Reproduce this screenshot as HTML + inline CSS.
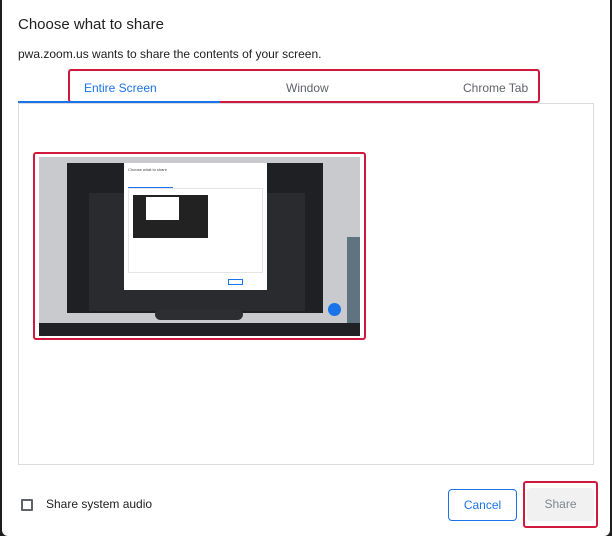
<!DOCTYPE html>
<html><head><style>
*{margin:0;padding:0;box-sizing:border-box}
body{width:612px;height:536px;background:#1e1e1e;font-family:"Liberation Sans",sans-serif;position:relative;overflow:hidden}
.dlg{position:absolute;left:2px;top:0;width:608px;height:536px;background:#fff;border-radius:0 0 6px 6px}
.a{position:absolute}
</style></head><body>
<div class="dlg"></div>
<div class="a" style="left:18px;top:16px;font-size:15px;color:#202124">Choose what to share</div>
<div class="a" style="left:18px;top:47px;font-size:12px;color:#202124">pwa.zoom.us wants to share the contents of your screen.</div>
<div class="a" style="left:84px;top:81px;font-size:12px;color:#1a73e8">Entire Screen</div>
<div class="a" style="left:286px;top:81px;font-size:12px;color:#5f6368">Window</div>
<div class="a" style="left:463px;top:81px;font-size:12px;color:#5f6368">Chrome Tab</div>
<div class="a" style="left:68px;top:69px;width:472px;height:34px;border:2px solid #d1193e;border-radius:3px"></div>
<div class="a" style="left:18px;top:101px;width:202px;height:3px;background:#1a73e8"></div>
<div class="a" style="left:18px;top:103px;width:576px;height:362px;border:1px solid #dadce0;border-top:1px solid #dadce0"></div>
<div class="a" style="left:33px;top:152px;width:333px;height:188px;border:2px solid #d1193e;border-radius:3px"></div>
<div class="a" style="left:39px;top:157px;width:321px;height:179px;background:#c8cacd">
  <div class="a" style="left:28px;top:6px;width:256px;height:150px;background:#1f2023"></div>
  <div class="a" style="left:50px;top:36px;width:216px;height:118px;background:#2a2b2e"></div>
  <div class="a" style="left:308px;top:80px;width:13px;height:90px;background:#5f7480"></div>
  <div class="a" style="left:85px;top:6px;width:143px;height:127px;background:#fff">
    <div class="a" style="left:4px;top:4px;font-size:4px;color:#444">Choose what to share</div>
    <div class="a" style="left:4px;top:24px;width:45px;height:1px;background:#1a73e8"></div>
    <div class="a" style="left:4px;top:25px;width:135px;height:85px;border:1px solid #e5e5e5"></div>
    <div class="a" style="left:9px;top:32px;width:75px;height:43px;background:#222"></div>
    <div class="a" style="left:22px;top:34px;width:33px;height:23px;background:#fff"></div>
    <div class="a" style="left:104px;top:116px;width:15px;height:6px;border:1px solid #1a73e8"></div>
  </div>
  <div class="a" style="left:116px;top:152px;width:88px;height:11px;background:#2d2e31;border-radius:6px"></div>
  <div class="a" style="left:289px;top:146px;width:13px;height:13px;background:#1a73e8;border-radius:50%"></div>
  <div class="a" style="left:0;top:166px;width:321px;height:13px;background:#202124"></div>
</div>
<div class="a" style="left:21px;top:499px;width:12px;height:12px;border:2px solid #5f6368;border-radius:1px"></div>
<div class="a" style="left:46px;top:497px;font-size:12px;color:#202124">Share system audio</div>
<div class="a" style="left:448px;top:489px;width:69px;height:32px;border:1px solid #1a73e8;border-radius:4px;color:#1a73e8;font-size:12px;text-align:center;line-height:30px">Cancel</div>
<div class="a" style="left:527px;top:488px;width:67px;height:33px;background:#f1f1f1;border-radius:4px;color:#80868b;font-size:12px;text-align:center;line-height:33px">Share</div>
<div class="a" style="left:523px;top:481px;width:75px;height:47px;border:2px solid #d1193e;border-radius:3px"></div>
</body></html>
